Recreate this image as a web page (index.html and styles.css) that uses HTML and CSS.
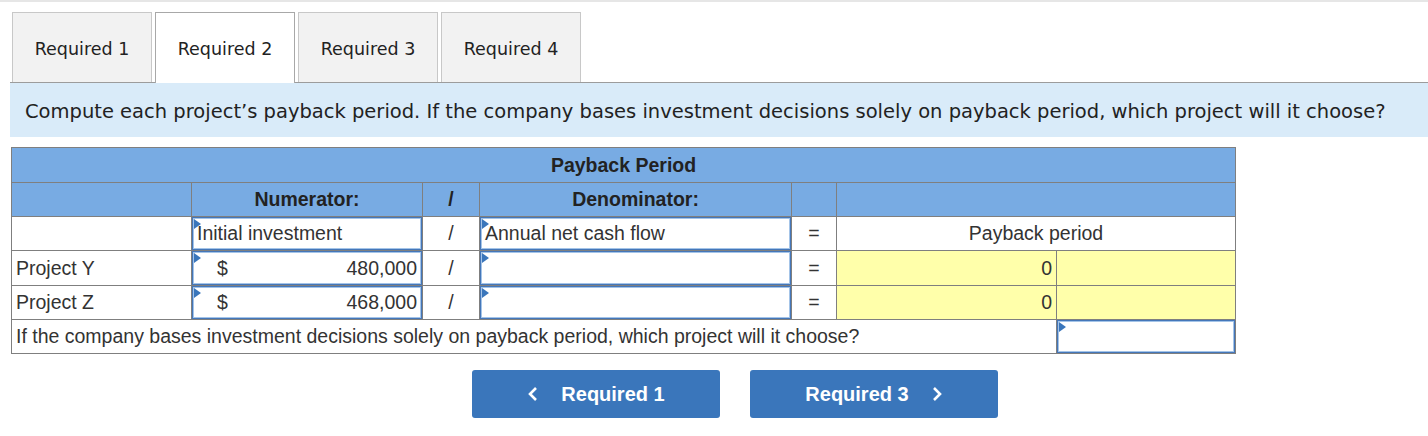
FILE: index.html
```html
<!DOCTYPE html>
<html>
<head>
<meta name="viewport" content="width=device-width, initial-scale=1">
<link rel="stylesheet" href="styles.css">
</head>
<body>

<div class="page">
  <div class="tabs">
    <div class="tab">Required 1</div>
    <div class="tab active">Required 2</div>
    <div class="tab">Required 3</div>
    <div class="tab">Required 4</div>
  </div>

  <div class="question">Compute each project’s payback period. If the company bases investment decisions solely on payback period, which project will it choose?</div>

  <table class="grid">
    <colgroup>
      <col style="width:180px">
      <col style="width:231px">
      <col style="width:57px">
      <col style="width:312px">
      <col style="width:45px">
      <col style="width:220px">
      <col style="width:179px">
    </colgroup>
    <tr class="head">
      <th colspan="7">Payback Period</th>
    </tr>
    <tr class="head">
      <th></th>
      <th>Numerator:</th>
      <th>/</th>
      <th>Denominator:</th>
      <th></th>
      <th colspan="2"></th>
    </tr>
    <tr>
      <td></td>
      <td class="cell-input"><div class="field">Initial investment</div></td>
      <td class="op">/</td>
      <td class="cell-input"><div class="field">Annual net cash flow</div></td>
      <td class="op">=</td>
      <td colspan="2" class="center">Payback period</td>
    </tr>
    <tr class="tall">
      <td class="label">Project Y</td>
      <td class="cell-input"><div class="field money"><span>$</span><span>480,000</span></div></td>
      <td class="op">/</td>
      <td class="cell-input"><div class="field"></div></td>
      <td class="op">=</td>
      <td class="result">0</td>
      <td class="result"></td>
    </tr>
    <tr>
      <td class="label">Project Z</td>
      <td class="cell-input"><div class="field money"><span>$</span><span>468,000</span></div></td>
      <td class="op">/</td>
      <td class="cell-input"><div class="field"></div></td>
      <td class="op">=</td>
      <td class="result">0</td>
      <td class="result"></td>
    </tr>
    <tr>
      <td colspan="6" class="label">If the company bases investment decisions solely on payback period, which project will it choose?</td>
      <td class="cell-input"><div class="field"></div></td>
    </tr>
  </table>

  <div class="nav">
    <button class="nav-btn">
      <svg width="12" height="16" viewBox="0 0 12 16"><polyline points="9,2 3,8 9,14" fill="none" stroke="#fff" stroke-width="2.6"/></svg>
      <span>Required 1</span>
    </button>
    <button class="nav-btn">
      <span>Required 3</span>
      <svg width="12" height="16" viewBox="0 0 12 16"><polyline points="3,2 9,8 3,14" fill="none" stroke="#fff" stroke-width="2.6"/></svg>
    </button>
  </div>
</div>

</body>
</html>
```

FILE: styles.css
```css
* {
  box-sizing: border-box;
}

body {
  margin: 0;
  background: #fff;
  border-top: 2px solid #e6e6e6;
}

.page {
  padding: 10px 0 0 10px;
}

.tabs {
  display: flex;
  gap: 3px;
  padding-left: 2px;
  border-bottom: 1px solid #9c9c9c;
  font-family: "DejaVu Sans", Verdana, sans-serif;
  font-size: 17.5px;
  color: #222;
}

.tab {
  width: 140px;
  height: 70px;
  display: flex;
  align-items: center;
  justify-content: center;
  padding-top: 2px;
  background: #f2f2f2;
  border: 1px solid #c8c8c8;
  border-bottom: none;
}

.tab.active {
  background: #fff;
  border-color: #a8a8a8;
  height: 71px;
  margin-bottom: -1px;
  padding-bottom: 1px;
}

.question {
  background: #d9ebf9;
  height: 54px;
  display: flex;
  align-items: center;
  padding: 2px 0 0 15px;
  font-family: "DejaVu Sans", Verdana, sans-serif;
  font-size: 19.5px;
  color: #222;
}

.grid {
  margin-top: 10px;
  margin-left: 1px;
  width: 1225px;
  table-layout: fixed;
  border-collapse: collapse;
  font-family: "Liberation Sans", Arial, sans-serif;
  font-size: 19.5px;
  color: #333;
}

.grid th,
.grid td {
  box-sizing: content-box;
  border: 1px solid #7f7f7f;
  height: 33px;
  padding: 0 4px;
}

.grid .head th {
  background: #78abe3;
  color: #222;
  font-weight: bold;
  text-align: center;
}

.grid .head:first-child th {
  height: 34px;
}

.grid .tall td {
  height: 34px;
}

.grid .op,
.grid .center {
  text-align: center;
}

.grid .result {
  background: #ffffaa;
  text-align: right;
}

.grid .cell-input {
  padding: 0;
}

.field {
  position: relative;
  height: 33px;
  border: 1px solid #4577b9;
  box-shadow: inset 0 0 0 1px #a4c4e8;
  background: #fff;
  display: flex;
  align-items: center;
  padding: 0 4px;
}

.tall .field {
  height: 34px;
}

.field::before {
  content: "";
  position: absolute;
  left: 1px;
  top: 1px;
  border-top: 5px solid transparent;
  border-bottom: 5px solid transparent;
  border-left: 7px solid #3a76bb;
}

.field.money {
  justify-content: space-between;
  padding-left: 24px;
}

.nav {
  display: flex;
  gap: 30px;
  margin-top: 16px;
  padding-left: 462px;
}

.nav-btn {
  width: 248px;
  height: 48px;
  border: none;
  border-radius: 3px;
  background: #3a76bb;
  color: #fff;
  font-family: "Liberation Sans", Arial, sans-serif;
  font-size: 20px;
  font-weight: bold;
  display: flex;
  align-items: center;
  justify-content: center;
  gap: 22px;
}

.nav-btn svg {
  display: block;
}
```
